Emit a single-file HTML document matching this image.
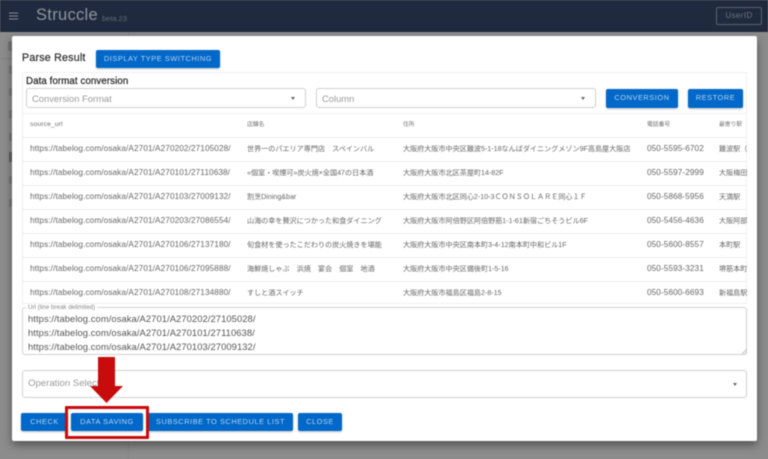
<!DOCTYPE html>
<html><head><meta charset="utf-8">
<style>
html,body{margin:0;padding:0;}
body{width:768px;height:459px;overflow:hidden;position:relative;background:#8c8c8c;font-family:"Liberation Sans","Noto Sans CJK JP",sans-serif;}
#p{position:absolute;left:0;top:0;width:768px;height:459px;filter:blur(.55px);overflow:hidden;background:#8c8c8c;}
.a{position:absolute;white-space:nowrap;}
.btn{position:absolute;background:#0068c8;color:#b9d3ee;border-radius:2px;font-size:7.4px;letter-spacing:.55px;text-align:center;box-shadow:0 1px 2px rgba(0,0,0,.25);white-space:nowrap;}
.line{position:absolute;left:22px;width:725px;height:1px;background:#ececec;}
.t{position:absolute;white-space:nowrap;color:#666;font-size:7.1px;height:12px;line-height:12px;}
.u{left:30px;letter-spacing:.11px;font-size:8.2px;}
.n{left:247px;}.d{left:403px;}.e{left:647px;font-size:8.2px;letter-spacing:.1px;}.s{left:719px;width:28px;overflow:hidden;}
.h{color:#6f6f6f;font-size:5.8px;}
.box{position:absolute;box-sizing:border-box;border:1px solid #d0d0d0;border-radius:3px;background:#fff;}
.ph{position:absolute;color:#9a9a9a;font-size:9.5px;white-space:nowrap;}
.car{position:absolute;width:0;height:0;border-left:2.5px solid transparent;border-right:2.5px solid transparent;border-top:3px solid #666;}
.ta{position:absolute;left:28px;color:#555;font-size:9.4px;letter-spacing:.08px;white-space:nowrap;line-height:14px;}
</style></head><body>
<div id="p">
<div class="a" style="left:0;top:0;width:768px;height:32px;background:#1f2a3e;"></div>
<svg class="a" style="left:9px;top:12px" width="10" height="8"><path d="M0 1h9M0 4h9M0 7h9" stroke="#8a909a" stroke-width="1"/></svg>
<div class="a" style="left:36px;top:3px;font-size:16.5px;line-height:24px;color:#8f959f;letter-spacing:.3px;">Struccle</div>
<div class="a" style="left:102px;top:13px;font-size:7.5px;line-height:12px;color:#636b79;">beta.23</div>
<div class="a" style="left:716px;top:7px;width:46px;height:18px;box-sizing:border-box;border:1px solid #5b6372;border-radius:2px;color:#6d7481;font-size:8px;line-height:16px;text-align:center;letter-spacing:.4px;">UserID</div>

<div class="a" style="left:128px;top:32px;width:1px;height:427px;background:#858585;"></div>
<div class="a" style="left:8px;top:41px;width:4px;height:10px;background:#747474;border-radius:2px 0 0 2px;"></div>
<div class="a" style="left:0;top:58px;width:12px;height:1px;background:#808080;"></div>
<div class="a" style="left:9px;top:66px;width:3px;height:8px;background:#787878;"></div>
<div class="a" style="left:9px;top:88px;width:3px;height:8px;background:#787878;"></div>
<div class="a" style="left:9px;top:110px;width:3px;height:8px;background:#787878;"></div>
<div class="a" style="left:9px;top:133px;width:3px;height:8px;background:#787878;"></div>
<div class="a" style="left:9px;top:152px;width:3px;height:10px;background:#606060;"></div>
<div class="a" style="left:9px;top:176px;width:3px;height:8px;background:#787878;"></div>
<div class="a" style="left:9px;top:199px;width:3px;height:8px;background:#787878;"></div>

<div class="a" style="left:12px;top:36px;width:745px;height:405px;background:#fff;border-radius:2px;box-shadow:0 4px 9px rgba(0,0,0,.42);"></div>

<div class="a" style="left:22px;top:51px;font-size:10.7px;line-height:15px;font-weight:400;color:#333;letter-spacing:.2px;-webkit-text-stroke:.25px #333;">Parse Result</div>
<div class="btn" style="left:96px;top:50px;width:124px;height:18px;line-height:17px;">DISPLAY TYPE SWITCHING</div>

<div class="a" style="left:22px;top:72px;width:725px;height:41px;box-sizing:border-box;border:1px solid #f0f0f0;border-bottom:none;"></div>
<div class="a" style="left:26px;top:75px;font-size:9.7px;line-height:13px;color:#222;letter-spacing:.1px;-webkit-text-stroke:.2px #222;">Data format conversion</div>
<div class="box" style="left:26px;top:88px;width:280px;height:20px;"></div>
<div class="ph" style="left:32px;top:92px;line-height:13px;font-size:9.4px;">Conversion Format</div>
<div class="car" style="left:291px;top:97px;"></div>
<div class="box" style="left:316px;top:88px;width:280px;height:20px;"></div>
<div class="ph" style="left:322px;top:92px;line-height:13px;font-size:9.4px;">Column</div>
<div class="car" style="left:581px;top:97px;"></div>
<div class="btn" style="left:606px;top:89px;width:72px;height:19px;line-height:18px;">CONVERSION</div>
<div class="btn" style="left:688px;top:89px;width:55px;height:19px;line-height:18px;">RESTORE</div>

<div class="a" style="left:22px;top:113px;width:725px;height:191px;box-sizing:border-box;border:1px solid #efefef;"></div>
<div class="t u h" style="top:119px;font-size:6.8px;letter-spacing:.1px;">source_url</div>
<div class="t n h" style="top:119px;">店舗名</div>
<div class="t d h" style="top:119px;">住所</div>
<div class="t e h" style="top:119px;font-size:5.8px;letter-spacing:0;">電話番号</div>
<div class="t s h" style="top:119px;">最寄り駅</div>

<div class="line" style="top:137px"></div><div class="line" style="top:161px"></div><div class="line" style="top:185px"></div><div class="line" style="top:209px"></div><div class="line" style="top:233px"></div><div class="line" style="top:257px"></div><div class="line" style="top:281px"></div>

<div class="t u" style="top:143px">https://tabelog.com/osaka/A2701/A270202/27105028/</div>
<div class="t n" style="top:143px">世界一のパエリア専門店　スペインバル</div>
<div class="t d" style="top:143px">大阪府大阪市中央区難波5-1-18なんばダイニングメゾン9F高島屋大阪店</div>
<div class="t e" style="top:143px">050-5595-6702</div>
<div class="t s" style="top:143px">難波駅（</div>

<div class="t u" style="top:167px">https://tabelog.com/osaka/A2701/A270101/27110638/</div>
<div class="t n" style="top:167px">«個室・喫煙可»炭火焼×全国47の日本酒</div>
<div class="t d" style="top:167px">大阪府大阪市北区茶屋町14-82F</div>
<div class="t e" style="top:167px">050-5597-2999</div>
<div class="t s" style="top:167px">大阪梅田</div>

<div class="t u" style="top:191px">https://tabelog.com/osaka/A2701/A270103/27009132/</div>
<div class="t n" style="top:191px">割烹Dining&amp;bar</div>
<div class="t d" style="top:191px">大阪府大阪市北区同心2-10-3ＣＯＮＳＯＬＡＲＥ同心１Ｆ</div>
<div class="t e" style="top:191px">050-5868-5956</div>
<div class="t s" style="top:191px">天満駅</div>

<div class="t u" style="top:215px">https://tabelog.com/osaka/A2701/A270203/27086554/</div>
<div class="t n" style="top:215px">山海の幸を贅沢につかった和食ダイニング</div>
<div class="t d" style="top:215px">大阪府大阪市阿倍野区阿倍野筋1-1-61新宿ごちそうビル6F</div>
<div class="t e" style="top:215px">050-5456-4636</div>
<div class="t s" style="top:215px">大阪阿部</div>

<div class="t u" style="top:239px">https://tabelog.com/osaka/A2701/A270106/27137180/</div>
<div class="t n" style="top:239px">旬食材を使ったこだわりの炭火焼きを堪能</div>
<div class="t d" style="top:239px">大阪府大阪市中央区南本町3-4-12南本町中和ビル1F</div>
<div class="t e" style="top:239px">050-5600-8557</div>
<div class="t s" style="top:239px">本町駅</div>

<div class="t u" style="top:263px">https://tabelog.com/osaka/A2701/A270106/27095888/</div>
<div class="t n" style="top:263px">海鮮焼しゃぶ　浜焼　宴会　個室　地酒</div>
<div class="t d" style="top:263px">大阪府大阪市中央区備後町1-5-16</div>
<div class="t e" style="top:263px">050-5593-3231</div>
<div class="t s" style="top:263px">堺筋本町</div>

<div class="t u" style="top:287px">https://tabelog.com/osaka/A2701/A270108/27134880/</div>
<div class="t n" style="top:287px">すしと酒スイッチ</div>
<div class="t d" style="top:287px">大阪府大阪市福島区福島2-8-15</div>
<div class="t e" style="top:287px">050-5600-6693</div>
<div class="t s" style="top:287px">新福島駅</div>

<div class="box" style="left:22px;top:307px;width:725px;height:48px;"></div>
<div class="a" style="left:26px;top:304px;background:#fff;padding:0 2px;font-size:6.2px;line-height:8px;color:#888;">Url (line break delimited)</div>
<div class="ta" style="top:312px">https://tabelog.com/osaka/A2701/A270202/27105028/</div>
<div class="ta" style="top:326px">https://tabelog.com/osaka/A2701/A270101/27110638/</div>
<div class="ta" style="top:340px">https://tabelog.com/osaka/A2701/A270103/27009132/</div>
<svg class="a" style="left:742px;top:349px" width="5" height="5"><path d="M0 5L5 0M3 5L5 3" stroke="#aaa" stroke-width=".7"/></svg>

<div class="box" style="left:22px;top:370px;width:725px;height:28px;"></div>
<div class="ph" style="left:28px;top:377px;line-height:14px;font-size:9.6px;">Operation Selection</div>
<div class="car" style="left:733px;top:383px;"></div>

<div class="btn" style="left:21px;top:413px;width:47px;height:18px;line-height:17px;">CHECK</div>
<div class="btn" style="left:71px;top:413px;width:72px;height:18px;line-height:17px;">DATA SAVING</div>
<div class="btn" style="left:148px;top:413px;width:145px;height:18px;line-height:17px;">SUBSCRIBE TO SCHEDULE LIST</div>
<div class="btn" style="left:298px;top:413px;width:44px;height:18px;line-height:17px;">CLOSE</div>

<div class="a" style="left:65px;top:406px;width:84px;height:33px;box-sizing:border-box;border:3px solid #c80b0b;border-radius:1px;"></div>
<svg class="a" style="left:90px;top:357px" width="34" height="46"><path d="M8 0H25V29H33L16.5 46L0 29H8Z" fill="#c80b0b"/></svg>
</div>
</body></html>
